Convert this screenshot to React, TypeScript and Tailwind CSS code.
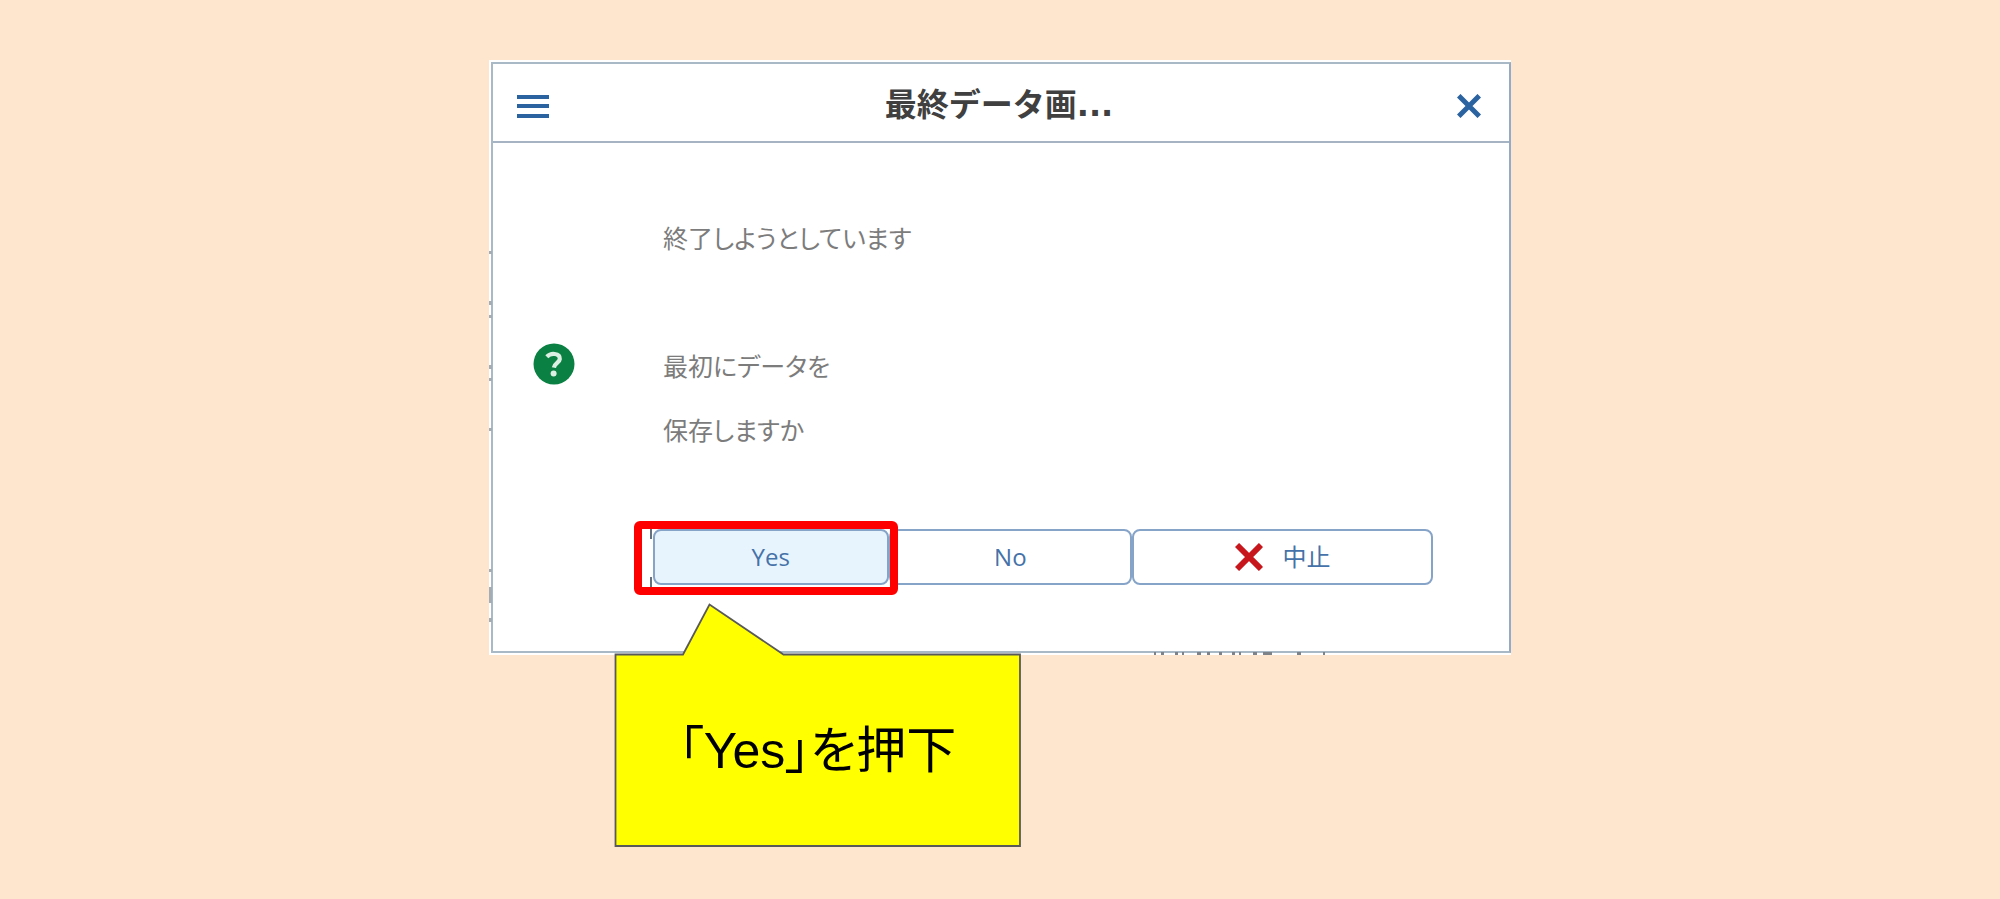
import React from 'react';

const MenuIcon: React.FC = () => (
    <svg width="32" height="24" viewBox="0 0 32 24" aria-hidden="true">
        <path d="M0 3h32M0 12h32M0 22h32" stroke="#2b62a0" strokeWidth="4" />
    </svg>
);

const CrossIcon: React.FC<{ size: number; color: string; weight: number }> = ({ size, color, weight }) => (
    <svg width={size} height={size} viewBox="0 0 24 24" aria-hidden="true">
        <path d="M3.500 3.500l17 17M20.500 3.500l-17 17" stroke={color} strokeWidth={weight} strokeLinecap="square" />
    </svg>
);

const QuestionIcon: React.FC = () => (
    <svg width="42" height="42" viewBox="0 0 42 42" aria-hidden="true">
        <circle cx="21" cy="21" r="20.5" fill="#0b8043" />
        <path
            d="M13.800 13.800c2.400-2.400 5-3.200 7.800-2.800 3.600.5 5.400 2.400 5.200 5-.3 3.800-5.200 4-5.900 8.600"
            fill="none"
            stroke="#dcefe3"
            strokeWidth="4.2"
        />
        <circle cx="20.6" cy="30.4" r="3" fill="#dcefe3" />
    </svg>
);

// x, width of the clipped glyph tops showing under the bottom border
const bottomMarks = [
    [665, 2], [672, 3], [686, 3], [693, 2], [708, 4], [718, 3], [730, 3],
    [743, 3], [750, 2], [764, 4], [774, 9], [808, 4], [834, 2],
];

// y, height of the clipped marks along the left border
const leftMarks = [
    [191, 3], [241, 4], [255, 3], [305, 4], [318, 3], [368, 3], [509, 3], [527, 16], [558, 4],
];

const buttonClass =
    'flex h-14 items-center justify-center rounded-lg border-2 border-[#86a3c8] font-["Open_Sans","Noto_Sans_CJK_JP",sans-serif] text-2xl text-[#4572a8]';

const App: React.FC = () => {
    return (
        <main className="min-h-screen bg-[#fde5ce] pt-[60px] font-['Noto_Sans_CJK_JP',sans-serif]">
            <div className="relative mx-auto w-full max-w-[1022px] bg-white py-[2px] pl-[2px]">
                <section role="dialog" aria-labelledby="dialog-title" className="border-2 border-[#a9b9c6] border-r-[#93abc8]">
                    {/* Title bar */}
                    <header className="grid h-[79px] grid-cols-[1fr_auto_1fr] items-center border-b-2 border-[#a5b3c3] pt-[6px] pr-[28px] pl-6">
                        <button type="button" aria-label="Menu" className="justify-self-start">
                            <MenuIcon />
                        </button>
                        <h1
                            id="dialog-title"
                            className="pb-1 font-['Noto_Sans_CJK_JP',sans-serif] text-[32px] leading-10 font-bold text-[#404040]"
                        >
                            最終データ画<span className="font-['DejaVu_Sans',sans-serif]">...</span>
                        </h1>
                        <button type="button" aria-label="Close" className="justify-self-end">
                            <CrossIcon size={24} color="#2b62a0" weight={5} />
                        </button>
                    </header>

                    {/* Message */}
                    <div className="flex items-center pt-[62px] pl-10">
                        <div className="flex w-[130px] shrink-0 pt-[62px]">
                            <QuestionIcon />
                        </div>
                        <div className="text-[25px] leading-[64px] text-[#7c7c7c] [font-feature-settings:'palt']">
                            <p>終了しようとしています</p>
                            <p className="mt-16">最初にデータを</p>
                            <p>保存しますか</p>
                        </div>
                    </div>

                    {/* Actions */}
                    <div className="flex pt-[68px] pr-[76px] pb-[66px] pl-40">
                        <div className="relative flex-[238]">
                            <button type="button" className={`${buttonClass} w-full bg-[#e8f4fd]`}>
                                Yes
                            </button>
                            <div className="pointer-events-none absolute -top-2 -right-[9px] -bottom-[10px] -left-[19px] flex flex-col justify-between rounded-md border-8 border-[#ff0000] pl-2">
                                <span className="h-[10px] w-[2px] bg-[#65717e]" />
                                <span className="h-[10px] w-[2px] bg-[#65717e]" />
                            </div>
                        </div>
                        <button type="button" className={`${buttonClass} flex-[242]`}>
                            No
                        </button>
                        <button type="button" className={`${buttonClass} flex-[300] gap-5`}>
                            <CrossIcon size={28} color="#c8161d" weight={5} />
                            中止
                        </button>
                    </div>
                </section>

                {/* Remains of the window behind the dialog */}
                <svg className="pointer-events-none absolute bottom-0 left-0" width="1022" height="3" aria-hidden="true">
                    {bottomMarks.map(([x, w]) => (
                        <rect key={x} x={x} y="0" width={w} height="3" fill="#7d8388" />
                    ))}
                </svg>
                <svg className="pointer-events-none absolute top-0 left-0" width="3" height="595" aria-hidden="true">
                    {leftMarks.map(([y, h]) => (
                        <rect key={y} x="0" y={y} width="3" height={h} fill="#a3adb5" />
                    ))}
                </svg>

                {/* Callout */}
                <div className="absolute top-[543px] left-[125px] flex h-[244px] w-[407px] items-center justify-center pt-[52px]">
                    <svg className="absolute inset-0" width="407" height="244" viewBox="0 0 407 244" aria-hidden="true">
                        <path
                            d="M1.500 51.500H69L95.500 1.500L169.500 51.500H406V243H1.500Z"
                            fill="#ffff00"
                            stroke="#595959"
                            strokeWidth="1.8"
                        />
                    </svg>
                    <p className="relative font-['Liberation_Sans','Noto_Sans_CJK_JP',sans-serif] text-[50px] leading-[60px] text-black [font-feature-settings:'palt']">
                        「Yes」を押下
                    </p>
                </div>
            </div>
        </main>
    );
};

export default App;
